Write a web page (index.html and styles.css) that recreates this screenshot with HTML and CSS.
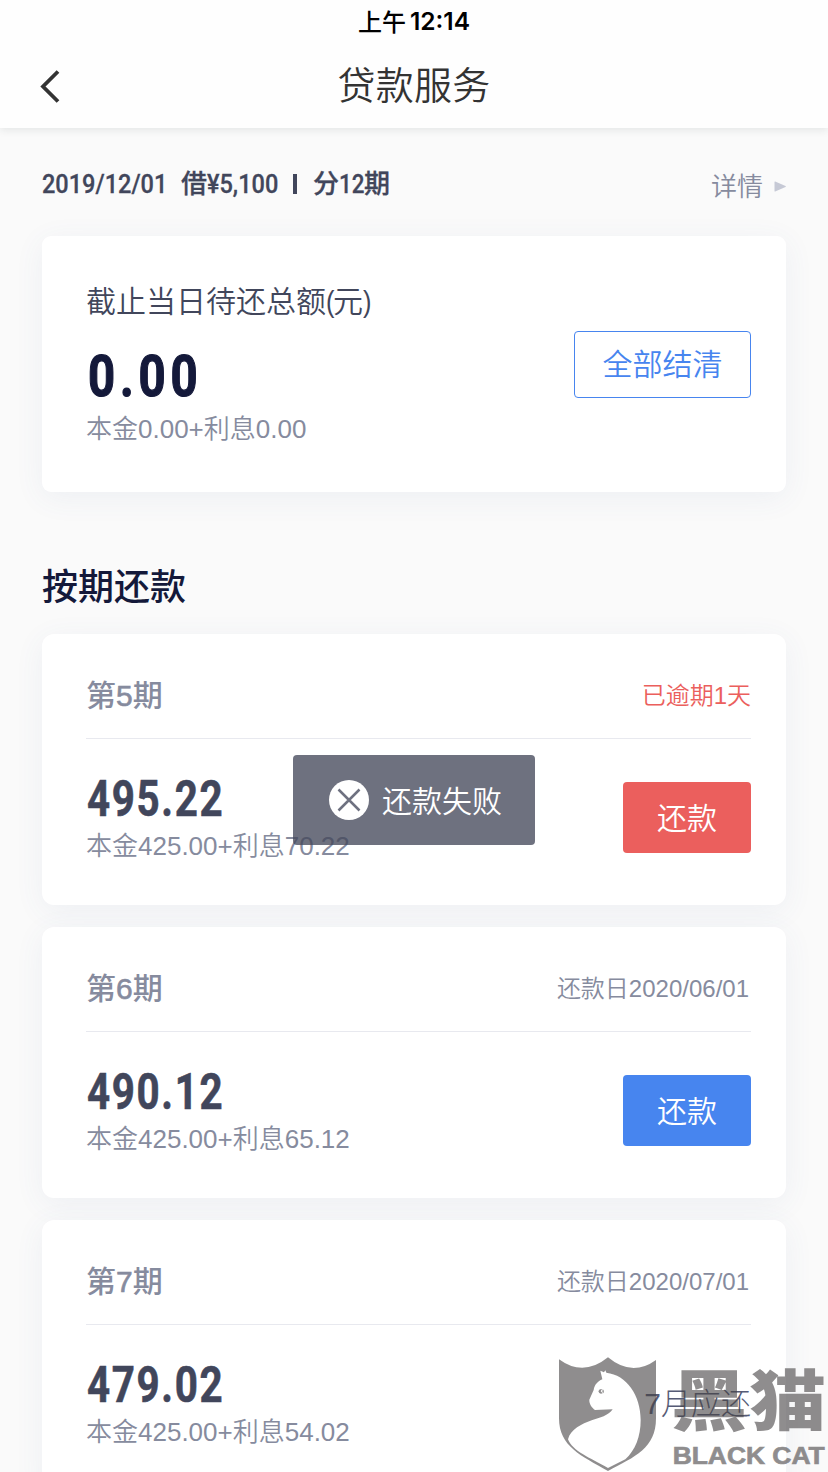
FILE: index.html
```html
<!DOCTYPE html>
<html lang="zh-CN">
<head>
<meta charset="utf-8">
<title>贷款服务</title>
<link rel="stylesheet" href="styles.css">
</head>
<body>
<div class="screen">
  <header class="header">
    <div class="status"><span>上午</span><span class="clock">12:14</span></div>
    <div class="nav">
      <svg class="back" width="24" height="36" viewBox="0 0 24 36"><path d="M20 3.500 5 18.500 20 33.500" fill="none" stroke="#333" stroke-width="3.800"/></svg>
      <h1 class="title">贷款服务</h1>
    </div>
  </header>
  <main class="content">
    <div class="loan">
      <div class="loan-info">
        <span class="cond date">2019/12/01</span><span>借</span><span class="cond sum">¥5,100</span><span class="bar"></span><span>分</span><span class="cond terms">12</span><span>期</span>
      </div>
      <div class="detail">详情<svg width="12" height="12" viewBox="0 0 12 12"><path d="M.5 1Q.5.4 1.200.600L11.500 5Q12.200 5.500 11.500 6L1.200 10.500Q.5 10.700.5 10Z" fill="#c6c9d5"/></svg></div>
    </div>
    <section class="card total">
      <div>
        <div class="label">截止当日待还总额<span class="paren">(</span>元<span class="paren">)</span></div>
        <div class="amount amount-total">0.00</div>
        <div class="parts">本金0.00+利息0.00</div>
      </div>
      <div class="settle">全部结清</div>
    </section>
    <h2 class="heading">按期还款</h2>
    <section class="card term">
      <div class="term-head"><span class="term-no">第<span class="num">5</span>期</span><span class="due overdue">已逾期1天</span></div>
      <div class="term-body">
        <div><div class="amount">495.22</div><div class="parts">本金425.00+利息70.22</div></div>
        <div class="pay pay-red">还款</div>
      </div>
    </section>
    <section class="card term">
      <div class="term-head"><span class="term-no">第<span class="num">6</span>期</span><span class="due date-due">还款日2020/06/01</span></div>
      <div class="term-body">
        <div><div class="amount">490.12</div><div class="parts">本金425.00+利息65.12</div></div>
        <div class="pay">还款</div>
      </div>
    </section>
    <section class="card term">
      <div class="term-head"><span class="term-no">第<span class="num">7</span>期</span><span class="due date-due">还款日2020/07/01</span></div>
      <div class="term-body">
        <div><div class="amount">479.02</div><div class="parts">本金425.00+利息54.02</div></div>
        <div class="later">7月应还</div>
      </div>
    </section>
  </main>
  <div class="toast">
    <svg width="40" height="40" viewBox="0 0 40 40"><circle cx="20" cy="20" r="20" fill="#fff"/><path d="M9.500 9.500 30.500 30.500M30.500 9.500 9.500 30.500" stroke="#6e7180" stroke-width="2.500"/></svg>
    <span class="toast-text">还款失败</span>
  </div>
  <svg class="watermark" width="288" height="132" viewBox="0 0 864 396">
    <path fill="#464344" fill-rule="evenodd" d="M57 58Q130 112 204 52Q276 112 348 60V235C348 325 285 350 204 393C125 348 57 320 57 235ZM181 92 187 118C173 124 163 135 161 150L148 179C147 192 156 203 165 210L218 208C205 228 180 232 155 241C125 252 92 267 84 298C96 332 150 354 204 384L256 358C286 330 302 290 302 240C302 165 260 105 199 98L196 91 192 97Z"/>
    <path fill="#464344" d="M175 154Q178 146 186 147L182 154 188 160Q178 164 175 154ZM188 148Q194 152 190 160L187 156Z"/>
    <text class="wm-cn" transform="translate(392 256) scale(1.065 .92)" x="0" y="0" textLength="438">黑猫</text>
    <text class="wm-en" x="398" y="373" textLength="456" lengthAdjust="spacingAndGlyphs">BLACK CAT</text>
  </svg>
</div>
</body>
</html>
```
FILE: styles.css
```css
* { box-sizing: border-box; }
body, h1, h2 { margin: 0; }
body {
  width: 828px;
  height: 1472px;
  overflow: hidden;
  background: #fafafa;
  font-family: "Liberation Sans", "Noto Sans CJK SC", sans-serif;
  font-weight: 350;
  color: #41465b;
}
.screen { position: relative; width: 828px; height: 1472px; overflow: hidden; }

.header { position: relative; height: 128px; background: #fefefe; box-shadow: 0 2px 8px rgba(30, 50, 50, .1); }
.status {
  display: flex;
  justify-content: center;
  gap: 4px;
  height: 42px;
  line-height: 41px;
  font-family: "Noto Sans CJK SC", sans-serif;
  font-size: 24px;
  font-weight: 500;
  color: #000;
}
.clock { font-family: Inter, sans-serif; font-size: 24.500px; line-height: 43px; font-weight: 600; }
.nav { display: grid; grid-template-columns: 120px 1fr 120px; align-items: center; height: 86px; }
.back { margin-left: 38px; }
.title { text-align: center; font-size: 38px; line-height: 88px; font-weight: 350; letter-spacing: .3px; color: #333; }

.content { padding: 0 42px; }
.loan { display: flex; justify-content: space-between; align-items: center; height: 108px; padding-top: 4px; }
.loan-info { display: flex; align-items: center; font-size: 26px; line-height: 36px; font-weight: 500; -webkit-text-stroke: .3px #41465b; }
.cond { display: inline-block; font-family: Roboto, sans-serif; font-weight: 500; transform-origin: 0 50%; transform: scaleX(.905); white-space: nowrap; }
.date { width: 139px; }
.sum { width: 73px; }
.bar { width: 4px; height: 20px; margin: 0 16px 0 13px; background: #41465b; }
.terms { width: 25px; transform: scaleX(.86); }
.detail { display: flex; align-items: center; gap: 11px; padding-top: 5px; font-size: 26px; line-height: 36px; color: #868b9e; }

.card { background: #fff; box-shadow: 0 6px 30px rgba(70, 100, 150, .07); }
.total { display: flex; justify-content: space-between; align-items: center; height: 256px; padding: 0 35px 0 44px; border-radius: 9px; }
.label { font-size: 30px; line-height: 44px; }
.paren { display: inline-block; width: 8px; margin-right: -1px; transform: scaleX(.85); transform-origin: 0 50%; }
.amount {
  margin-left: 1px;
  font-family: Roboto, sans-serif;
  font-size: 49.500px;
  line-height: 56px;
  font-weight: 700;
  letter-spacing: 2px;
  transform: scaleX(.815);
  transform-origin: 0 50%;
  -webkit-text-stroke: .6px currentColor;
}
.amount-total { margin: 20px 0 0 2px; font-size: 57px; line-height: 66px; letter-spacing: 5.800px; transform: scaleX(.83); color: #14193a; -webkit-text-stroke: 1.200px currentColor; }
.parts { font-size: 26px; line-height: 38px; color: #868b9e; }
.settle { width: 177px; height: 67px; border: 1px solid #4785ef; border-radius: 4px; text-align: center; font-size: 30px; line-height: 65px; color: #4785ef; }

.heading { padding: 65px 0 0; height: 142px; font-size: 36px; line-height: 54px; font-weight: 500; color: #14193a; font-family: "Noto Sans CJK SC", sans-serif; }
.term { height: 271px; margin-bottom: 22px; padding: 0 35px 0 44px; border-radius: 12px; }
.term-head { display: flex; justify-content: space-between; align-items: center; height: 105px; padding-top: 14px; border-bottom: 1px solid #e8e9ef; color: #868b9e; }
.term-no { font-size: 30px; font-weight: 500; }
.num { -webkit-text-stroke: .6px #868b9e; }
.due { font-size: 24px; }
.date-due { padding-right: 2px; }
.overdue { color: #eb5f5d; }
.term-body { display: flex; justify-content: space-between; align-items: center; padding-top: 32px; }
.pay { width: 128px; height: 71px; margin-bottom: 2px; border-radius: 4px; background: #4785ef; text-align: center; font-size: 30px; line-height: 74px; color: #fff; }
.pay-red { background: #eb5f5d; }
.later { font-size: 30px; line-height: 44px; font-weight: 300; color: #565b76; }

.toast {
  position: absolute;
  left: 293px;
  top: 755px;
  width: 242px;
  height: 90px;
  display: flex;
  align-items: center;
  padding-left: 36px;
  gap: 13px;
  border-radius: 4px;
  background: rgba(66, 70, 89, .77);
  font-size: 30px;
  color: #fff;
}
.toast-text { line-height: 40px; padding-top: 3px; }
.watermark { position: absolute; right: 0; bottom: 0; opacity: .6; }
.wm-cn { font-family: "Noto Sans CJK SC", sans-serif; font-size: 216px; font-weight: 900; fill: #464344; }
.wm-en { font-family: "Liberation Sans", sans-serif; font-size: 70px; font-weight: 700; fill: #464344; stroke: #464344; stroke-width: 2px; }
```
